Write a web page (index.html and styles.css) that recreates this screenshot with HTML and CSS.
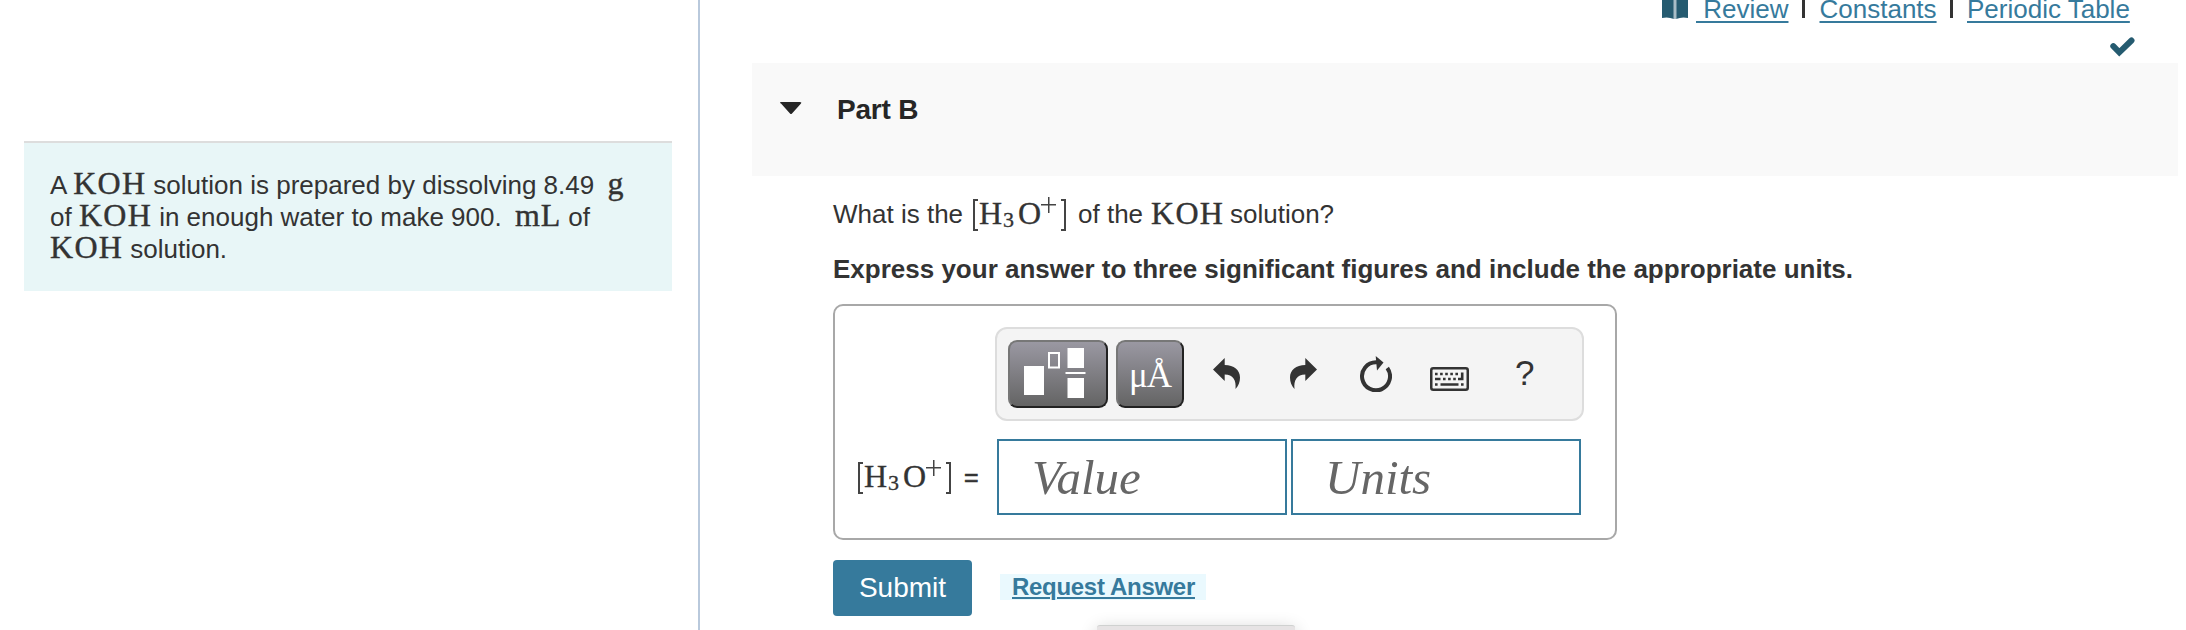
FILE: index.html
```
<!DOCTYPE html>
<html lang="en">
<head>
    <meta charset="UTF-8">
    <meta name="viewport" content="width=device-width, initial-scale=1.0">
    <title>Part B</title>
    <link rel="stylesheet" href="styles.css">
</head>
<body>
    <div class="page">
        <!-- left: problem statement -->
        <div class="left">
            <div class="problem">
                <p class="line l1">A <span class="math">KOH</span> solution is prepared by dissolving 8.49 <span class="unit">g</span></p>
                <p class="line l2">of <span class="math">KOH</span> in enough water to make 900. <span class="unit ml">mL</span> of</p>
                <p class="line l3"><span class="math">KOH</span> solution.</p>
            </div>
        </div>
        <!-- right: question -->
        <div class="right">
            <div class="links">
                <svg class="book" width="26" height="22" viewBox="0 0 26 22">
                    <path d="M0 0H12V21Q6 18.500 0 20ZM14 0H26V20Q20 18.500 14 21Z" fill="#255b70"/>
                    <path d="M13 0V21" stroke="#a8bdc6" stroke-width="3"/>
                </svg>
                <a class="review" href="#">&nbsp;Review</a>
                <span class="bar"></span>
                <a class="constants" href="#">Constants</a>
                <span class="bar"></span>
                <a class="table" href="#">Periodic Table</a>
            </div>
            <div class="status">
                <svg width="25" height="20" viewBox="0 0 25 20">
                    <path d="M3.300 9.200L9.300 15.300L21.500 3.500" fill="none" stroke="#255b70" stroke-width="6" stroke-linecap="round"/>
                </svg>
            </div>
            <div class="part">
                <svg width="22" height="13" viewBox="0 0 22 13"><path d="M0 1Q0 0 1 0H20Q22 0 21 1.500L12 11.500Q11 12.500 10 11.500L1 1.500Z" fill="#262626"/></svg>
                <h2>Part B</h2>
            </div>
            <div class="content">
                <p class="question">
                    <span class="what">What is the</span>
                    <span class="formula"><i class="bracket"></i><span class="h">H</span><sub>3</sub><span class="o">O</span><i class="plus"></i><i class="bracket close"></i></span>
                    <span class="ofthe">of the</span>
                    <span class="math">KOH</span>
                    <span class="sol">solution?</span>
                </p>
                <p class="express">Express your answer to three significant figures and include the appropriate units.</p>
                <div class="answer">
                    <div class="toolbar">
                        <button class="btn template">
                            <svg width="62" height="50" viewBox="0 0 62 50">
                                <rect x="0" y="18" width="20" height="29" fill="#fff"/>
                                <rect x="25" y="5" width="10" height="14.500" fill="none" stroke="#fff" stroke-width="2"/>
                                <rect x="43.500" y="0" width="16.500" height="20" fill="#fff"/>
                                <rect x="41.500" y="24" width="20" height="2" fill="#fff"/>
                                <rect x="43.500" y="30" width="16.500" height="20" fill="#fff"/>
                            </svg>
                        </button>
                        <button class="btn symbols">μÅ</button>
                        <svg class="undo" width="27" height="31" viewBox="0 0 27 31">
                            <path d="M0 11.500L11.700 0V7C21 7 27 12 27 19.500C27 24 25.500 28 22.500 31C23.500 22 20 16.500 11.700 16.500V23Z" fill="#333"/>
                        </svg>
                        <svg class="redo" width="27" height="31" viewBox="0 0 27 31">
                            <path d="M27 11.500L15.300 0V7C6 7 0 12 0 19.500C0 24 1.500 28 4.500 31C3.500 22 7 16.500 15.300 16.500V23Z" fill="#333"/>
                        </svg>
                        <svg class="reset" width="32" height="36" viewBox="0 0 32 36">
                            <path d="M17 6.300H16A14 14 0 1 0 27.300 12" fill="none" stroke="#333" stroke-width="4"/>
                            <path d="M15.700 0L23.500 6.500L17 14.500Z" fill="#333"/>
                        </svg>
                        <svg class="keyboard" width="39" height="24" viewBox="0 0 39 24">
                            <rect x="1.250" y="1.250" width="36.500" height="21.500" rx="2" fill="none" stroke="#333" stroke-width="2.500"/>
                            <path d="M5 7H29" fill="none" stroke="#333" stroke-width="2.600" stroke-dasharray="2.600 2.500"/>
                            <path d="M13 12H28" fill="none" stroke="#333" stroke-width="2.600" stroke-dasharray="2.600 2.500"/>
                            <path d="M5 12H10.500M28 12H33.500M32.200 5.500V13M5 17.500H7.600M10.500 17.500H28.500M31 17.500H33.600" fill="none" stroke="#333" stroke-width="2.600"/>
                        </svg>
                        <span class="help">?</span>
                    </div>
                    <div class="fields">
                        <span class="formula small"><i class="bracket"></i><span class="h">H</span><sub>3</sub><span class="o">O</span><i class="plus"></i><i class="bracket close"></i></span>
                        <span class="equal">=</span>
                        <div class="field value">Value</div>
                        <div class="field units">Units</div>
                    </div>
                </div>
                <div class="actions">
                    <button class="submit">Submit</button>
                    <a class="request" href="#">Request Answer</a>
                </div>
                <div class="popup"></div>
            </div>
        </div>
    </div>
</body>
</html>
```
FILE: styles.css
```
*{
    margin: 0;
    padding: 0;
    box-sizing: border-box;
}
body{
    width: 2186px;
    height: 630px;
    overflow: hidden;
    background-color: #fff;
    color: #333;
    font-family: "Liberation Sans", Arial, sans-serif;
    font-size: 26px;
}
.page{
    display: flex;
    height: 630px;
    overflow: hidden;
}
.left{
    width: 700px;
    padding: 141px 0 0 24px;
    border-right: 2px solid #b9c9dc;
}
.problem{
    width: 648px;
    height: 150px;
    padding: 26px 0 0 26px;
    border-top: 2px solid #ddd;
    background-color: #e8f6f7;
}
.line{
    height: 32px;
    line-height: 32px;
    white-space: nowrap;
}
.math,.unit{
    font-family: "Liberation Serif", "Times New Roman", serif;
    font-size: 32px;
    line-height: 20px;
    letter-spacing: 1.3px;
    -webkit-text-stroke: 0.4px #333;
}
.math{
    display: inline-block;
    width: 73px;
}
.unit{
    margin-left: 6px;
    letter-spacing: 0;
}
.ml{
    letter-spacing: 0.8px;
}
.right{
    width: 1486px;
    padding-left: 52px;
}
.links{
    display: flex;
    height: 37px;
    padding-left: 910px;
}
.links a{
    height: 30px;
    line-height: 30px;
    margin-top: -6px;
    color: #367a9c;
    white-space: nowrap;
    text-decoration-thickness: 2px;
    text-underline-offset: 3px;
}
.book{
    margin: -2px 8px 0 0;
}
.review{
    width: 92px;
}
.constants{
    width: 116px;
}
.bar{
    width: 3px;
    height: 18px;
    margin: 0 14.5px 0 14px;
    background-color: #333;
}
.status{
    height: 26px;
    padding-left: 1358px;
    line-height: 0;
}
.part{
    display: flex;
    align-items: flex-start;
    width: 1426px;
    height: 113px;
    padding: 39px 0 0 28px;
    background-color: #f9f9f9;
}
.part h2{
    margin: -12px 0 0 35px;
    font-size: 28px;
    line-height: 40px;
    letter-spacing: -0.2px;
    color: #262626;
}
.content{
    position: relative;
    padding: 20px 0 0 81px;
}
.question{
    display: flex;
    height: 40px;
    line-height: 36px;
    white-space: nowrap;
}
.question .math{
    width: 73px;
    line-height: 34px;
}
.what{
    width: 140px;
}
.ofthe{
    width: 73px;
    margin-left: 12px;
}
.sol{
    margin-left: 6px;
}
.formula{
    display: flex;
    width: 93px;
    height: 36px;
    line-height: 34px;
    font-family: "Liberation Serif", "Times New Roman", serif;
    font-size: 32px;
    -webkit-text-stroke: 0.3px #333;
}
.bracket{
    width: 5px;
    height: 32px;
    margin-top: 3px;
    border: 2px solid #444;
    border-right: none;
}
.close{
    margin-left: 5px;
    border: 2px solid #444;
    border-left: none;
}
.h{
    width: 24px;
    padding-left: 1px;
}
.formula sub{
    width: 16px;
    padding-left: 1px;
    font-size: 22px;
    line-height: 48px;
}
.o{
    width: 23px;
}
.plus{
    width: 15px;
    height: 16px;
    margin-top: 1px;
    background: linear-gradient(#444,#444) center/100% 1.5px no-repeat, linear-gradient(#444,#444) center/1.5px 100% no-repeat;
}
.express{
    height: 68px;
    padding-top: 16px;
    line-height: 34px;
    font-weight: bold;
    white-space: nowrap;
}
.answer{
    width: 784px;
    height: 236px;
    padding: 21px 0 0 20px;
    border: 2px solid #a8a8a8;
    border-radius: 10px;
}
.toolbar{
    display: flex;
    align-items: flex-start;
    width: 589px;
    height: 94px;
    margin-left: 140px;
    padding: 11px 0 0 11px;
    border: 2px solid #ddd;
    border-radius: 12px;
    background-color: #f4f4f4;
}
.btn{
    height: 68px;
    border: 2px solid;
    border-color: #777 #222 #222 #777;
    border-radius: 9px;
    background: linear-gradient(#9a98a2,#646464);
    color: #fff;
}
.template{
    width: 100px;
    padding: 0 0 2px 14px;
    text-align: left;
    line-height: 0;
}
.template svg{
    display: block;
}
.symbols{
    width: 68px;
    margin-left: 8px;
    padding-top: 4px;
    font-family: "Liberation Serif", serif;
    font-size: 35px;
    letter-spacing: -1px;
}
.undo{
    margin: 18px 0 0 29px;
}
.redo{
    margin: 18px 0 0 50px;
}
.reset{
    margin: 16px 0 0 43px;
}
.keyboard{
    margin: 27px 0 0 38px;
}
.help{
    margin: 13px 0 0 46px;
    font-size: 35px;
}
.fields{
    display: flex;
    width: 750px;
    padding-top: 18px;
}
.small{
    width: 98px;
    margin: 20px 0 0 3px;
}
.equal{
    width: 14px;
    margin: 23px 19px 0 8px;
    font-size: 25px;
    line-height: 30px;
    -webkit-text-stroke: 0.6px #333;
}
.field{
    width: 290px;
    height: 76px;
    border: 2px solid #367a9c;
    padding-left: 33px;
    font-family: "Liberation Serif", serif;
    font-size: 49px;
    font-style: italic;
    line-height: 73px;
    color: #666;
}
.units{
    margin-left: 4px;
    padding-left: 32px;
}
.actions{
    display: flex;
    padding-top: 20px;
}
.submit{
    width: 139px;
    height: 56px;
    border: none;
    border-radius: 4px;
    background-color: #367a9c;
    color: #fff;
    font-family: inherit;
    font-size: 28px;
}
.request{
    width: 206px;
    height: 26px;
    margin: 14px 0 0 28px;
    padding-left: 12px;
    background-color: #eaf9fe;
    color: #367a9c;
    font-size: 24px;
    font-weight: bold;
    line-height: 26px;
    letter-spacing: -0.3px;
    white-space: nowrap;
    text-decoration-thickness: 2px;
    text-underline-offset: 2px;
}
/* tooltip peeking in from the bottom edge */
.popup{
    position: absolute;
    left: 345px;
    top: 449px;
    width: 198px;
    height: 30px;
    border-top: 1px solid #cfd1d0;
    border-radius: 3px;
    background-color: #e6e3e4;
    box-shadow: 0 4px 18px rgba(0,0,0,0.2);
}
```
